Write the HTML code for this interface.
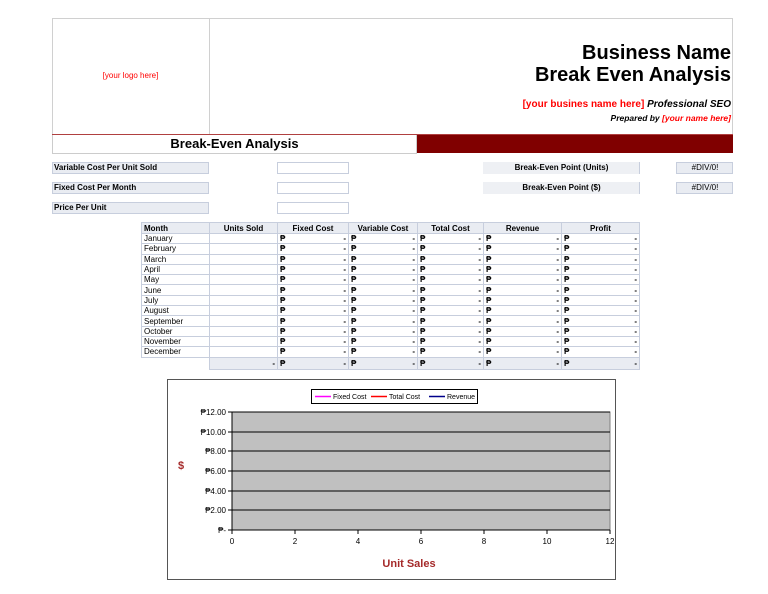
<!DOCTYPE html>
<html><head><meta charset="utf-8"><style>
*{margin:0;padding:0;box-sizing:border-box}
body{width:768px;height:594px;background:#fff;position:relative;font-family:"Liberation Sans",Arial,sans-serif;overflow:hidden}
.a{position:absolute}
.lbl{position:absolute;background:#e9ecf2;border:1px solid #c7cedd;font-size:8px;font-weight:bold;padding-left:1px;line-height:10px}
.inp{position:absolute;border:1px solid #c7cedd;background:#fff}
table{position:absolute;left:141px;top:222px;border-collapse:collapse;font-size:8px;table-layout:fixed}
td{border:1px solid #c7cedd;height:10.3px;line-height:9px;padding:0 2px;white-space:nowrap;overflow:hidden}
th{border:1px solid #c7cedd;height:11px;font-size:8px;font-weight:bold;background:#e9ecf2;line-height:9px}
th:first-child{text-align:left;padding-left:2px}
.c{display:flex;justify-content:space-between;font-weight:bold}
tr.t td{background:#e9ecf2;height:12px}
tr.t td:first-child{background:#fff;border:none}
.chart{position:absolute;left:167px;top:379px;width:449px;height:201px;border:1px solid #555}
</style></head><body>
<div class="a" style="left:52px;top:18px;width:681px;height:117px;border:1px solid #d0d0d0;border-bottom:none"></div>
<div class="a" style="left:209px;top:18px;width:1px;height:117px;background:#d0d0d0"></div>
<div class="a" style="left:52px;top:71px;width:157px;text-align:center;color:#f00;font-size:8px">[your logo here]</div>
<div class="a" style="right:37px;top:42px;text-align:right;font-size:20px;font-weight:bold;line-height:22px">Business Name<br>Break Even Analysis</div>
<div class="a" style="right:37px;top:99px;font-size:10px;font-weight:bold;color:#f00">[your busines name here] <i style="color:#000">Professional SEO</i></div>
<div class="a" style="right:37px;top:113px;font-size:8.5px;font-weight:bold;font-style:italic">Prepared by <span style="color:#f00">[your name here]</span></div>
<div class="a" style="left:52px;top:134px;width:681px;height:1px;background:#b04040"></div>
<div class="a" style="left:52px;top:135px;width:365px;height:19px;border:1px solid #ccc;border-top:none;text-align:center;font-size:13px;font-weight:bold;line-height:18px">Break-Even Analysis</div>
<div class="a" style="left:417px;top:135px;width:316px;height:18px;background:#800000"></div>

<div class="lbl" style="left:52px;top:162px;width:157px;height:12px">Variable Cost Per Unit Sold</div>
<div class="lbl" style="left:52px;top:182px;width:157px;height:12px">Fixed Cost Per Month</div>
<div class="lbl" style="left:52px;top:202px;width:157px;height:12px">Price Per Unit</div>
<div class="inp" style="left:277px;top:162px;width:72px;height:12px"></div>
<div class="inp" style="left:277px;top:182px;width:72px;height:12px"></div>
<div class="inp" style="left:277px;top:202px;width:72px;height:12px"></div>
<div class="lbl" style="left:483px;top:162px;width:157px;height:12px;border:none;border-right:1px solid #c7cedd;background:#eef0f4;text-align:center;line-height:12px">Break-Even Point (Units)</div>
<div class="lbl" style="left:483px;top:182px;width:157px;height:12px;border:none;border-right:1px solid #c7cedd;background:#eef0f4;text-align:center;line-height:12px">Break-Even Point ($)</div>
<div class="lbl" style="left:676px;top:162px;width:57px;height:12px;text-align:center;font-weight:normal">#DIV/0!</div>
<div class="lbl" style="left:676px;top:182px;width:57px;height:12px;text-align:center;font-weight:normal">#DIV/0!</div>

<table>
<colgroup><col style="width:68px"><col style="width:68px"><col style="width:71px"><col style="width:69px"><col style="width:66px"><col style="width:78px"><col style="width:78px"></colgroup>
<tr><th>Month</th><th>Units Sold</th><th>Fixed Cost</th><th>Variable Cost</th><th>Total Cost</th><th>Revenue</th><th>Profit</th></tr>
<tr><td>January</td><td></td><td><div class="c"><span>₱</span><span>-</span></div></td><td><div class="c"><span>₱</span><span>-</span></div></td><td><div class="c"><span>₱</span><span>-</span></div></td><td><div class="c"><span>₱</span><span>-</span></div></td><td><div class="c"><span>₱</span><span>-</span></div></td></tr>
<tr><td>February</td><td></td><td><div class="c"><span>₱</span><span>-</span></div></td><td><div class="c"><span>₱</span><span>-</span></div></td><td><div class="c"><span>₱</span><span>-</span></div></td><td><div class="c"><span>₱</span><span>-</span></div></td><td><div class="c"><span>₱</span><span>-</span></div></td></tr>
<tr><td>March</td><td></td><td><div class="c"><span>₱</span><span>-</span></div></td><td><div class="c"><span>₱</span><span>-</span></div></td><td><div class="c"><span>₱</span><span>-</span></div></td><td><div class="c"><span>₱</span><span>-</span></div></td><td><div class="c"><span>₱</span><span>-</span></div></td></tr>
<tr><td>April</td><td></td><td><div class="c"><span>₱</span><span>-</span></div></td><td><div class="c"><span>₱</span><span>-</span></div></td><td><div class="c"><span>₱</span><span>-</span></div></td><td><div class="c"><span>₱</span><span>-</span></div></td><td><div class="c"><span>₱</span><span>-</span></div></td></tr>
<tr><td>May</td><td></td><td><div class="c"><span>₱</span><span>-</span></div></td><td><div class="c"><span>₱</span><span>-</span></div></td><td><div class="c"><span>₱</span><span>-</span></div></td><td><div class="c"><span>₱</span><span>-</span></div></td><td><div class="c"><span>₱</span><span>-</span></div></td></tr>
<tr><td>June</td><td></td><td><div class="c"><span>₱</span><span>-</span></div></td><td><div class="c"><span>₱</span><span>-</span></div></td><td><div class="c"><span>₱</span><span>-</span></div></td><td><div class="c"><span>₱</span><span>-</span></div></td><td><div class="c"><span>₱</span><span>-</span></div></td></tr>
<tr><td>July</td><td></td><td><div class="c"><span>₱</span><span>-</span></div></td><td><div class="c"><span>₱</span><span>-</span></div></td><td><div class="c"><span>₱</span><span>-</span></div></td><td><div class="c"><span>₱</span><span>-</span></div></td><td><div class="c"><span>₱</span><span>-</span></div></td></tr>
<tr><td>August</td><td></td><td><div class="c"><span>₱</span><span>-</span></div></td><td><div class="c"><span>₱</span><span>-</span></div></td><td><div class="c"><span>₱</span><span>-</span></div></td><td><div class="c"><span>₱</span><span>-</span></div></td><td><div class="c"><span>₱</span><span>-</span></div></td></tr>
<tr><td>September</td><td></td><td><div class="c"><span>₱</span><span>-</span></div></td><td><div class="c"><span>₱</span><span>-</span></div></td><td><div class="c"><span>₱</span><span>-</span></div></td><td><div class="c"><span>₱</span><span>-</span></div></td><td><div class="c"><span>₱</span><span>-</span></div></td></tr>
<tr><td>October</td><td></td><td><div class="c"><span>₱</span><span>-</span></div></td><td><div class="c"><span>₱</span><span>-</span></div></td><td><div class="c"><span>₱</span><span>-</span></div></td><td><div class="c"><span>₱</span><span>-</span></div></td><td><div class="c"><span>₱</span><span>-</span></div></td></tr>
<tr><td>November</td><td></td><td><div class="c"><span>₱</span><span>-</span></div></td><td><div class="c"><span>₱</span><span>-</span></div></td><td><div class="c"><span>₱</span><span>-</span></div></td><td><div class="c"><span>₱</span><span>-</span></div></td><td><div class="c"><span>₱</span><span>-</span></div></td></tr>
<tr><td>December</td><td></td><td><div class="c"><span>₱</span><span>-</span></div></td><td><div class="c"><span>₱</span><span>-</span></div></td><td><div class="c"><span>₱</span><span>-</span></div></td><td><div class="c"><span>₱</span><span>-</span></div></td><td><div class="c"><span>₱</span><span>-</span></div></td></tr>
<tr class="t"><td></td><td style="text-align:right;font-weight:bold">-</td><td><div class="c"><span>₱</span><span>-</span></div></td><td><div class="c"><span>₱</span><span>-</span></div></td><td><div class="c"><span>₱</span><span>-</span></div></td><td><div class="c"><span>₱</span><span>-</span></div></td><td><div class="c"><span>₱</span><span>-</span></div></td></tr>
</table>

<div class="chart"></div>
<svg class="a" style="left:0;top:0" width="768" height="594">
<rect x="311.5" y="389.5" width="166" height="14" fill="#fff" stroke="#000"/>
<line x1="315" y1="396.5" x2="331" y2="396.5" stroke="#f0f" stroke-width="1.5"/>
<line x1="371" y1="396.5" x2="387" y2="396.5" stroke="#f00" stroke-width="1.5"/>
<line x1="429" y1="396.5" x2="445" y2="396.5" stroke="#00008b" stroke-width="1.5"/>
<g font-family="Liberation Sans, sans-serif" font-size="7">
<text x="333" y="399">Fixed Cost</text><text x="389" y="399">Total Cost</text><text x="447" y="399">Revenue</text>
</g>
<rect x="232" y="412" width="378" height="118" fill="#c0c0c0" stroke="#808080"/>
<g stroke="#000" stroke-width="1">
<line x1="232" y1="412" x2="610" y2="412"/><line x1="232" y1="432" x2="610" y2="432"/><line x1="232" y1="451" x2="610" y2="451"/><line x1="232" y1="471" x2="610" y2="471"/><line x1="232" y1="491" x2="610" y2="491"/><line x1="232" y1="510" x2="610" y2="510"/><line x1="232" y1="530" x2="610" y2="530"/>
<line x1="232" y1="412" x2="232" y2="534"/>
<line x1="228" y1="412" x2="232" y2="412"/><line x1="228" y1="432" x2="232" y2="432"/><line x1="228" y1="451" x2="232" y2="451"/><line x1="228" y1="471" x2="232" y2="471"/><line x1="228" y1="491" x2="232" y2="491"/><line x1="228" y1="510" x2="232" y2="510"/><line x1="228" y1="530" x2="232" y2="530"/>
<line x1="295" y1="530" x2="295" y2="534"/><line x1="358" y1="530" x2="358" y2="534"/><line x1="421" y1="530" x2="421" y2="534"/><line x1="484" y1="530" x2="484" y2="534"/><line x1="547" y1="530" x2="547" y2="534"/><line x1="610" y1="530" x2="610" y2="534"/>
</g>
<g font-family="Liberation Sans, sans-serif" font-size="8" text-anchor="end">
<text x="226" y="415">₱12.00</text><text x="226" y="435">₱10.00</text><text x="226" y="454">₱8.00</text><text x="226" y="474">₱6.00</text><text x="226" y="494">₱4.00</text><text x="226" y="513">₱2.00</text><text x="226" y="533">₱-</text>
</g>
<g font-family="Liberation Sans, sans-serif" font-size="8" text-anchor="middle">
<text x="232" y="544">0</text><text x="295" y="544">2</text><text x="358" y="544">4</text><text x="421" y="544">6</text><text x="484" y="544">8</text><text x="547" y="544">10</text><text x="610" y="544">12</text>
</g>
<text x="181" y="469" font-family="Liberation Sans, sans-serif" font-size="11" font-weight="bold" fill="#a52a2a" text-anchor="middle">$</text>
<text x="409" y="567" font-family="Liberation Sans, sans-serif" font-size="11" font-weight="bold" fill="#a52a2a" text-anchor="middle">Unit Sales</text>
</svg>
</body></html>
